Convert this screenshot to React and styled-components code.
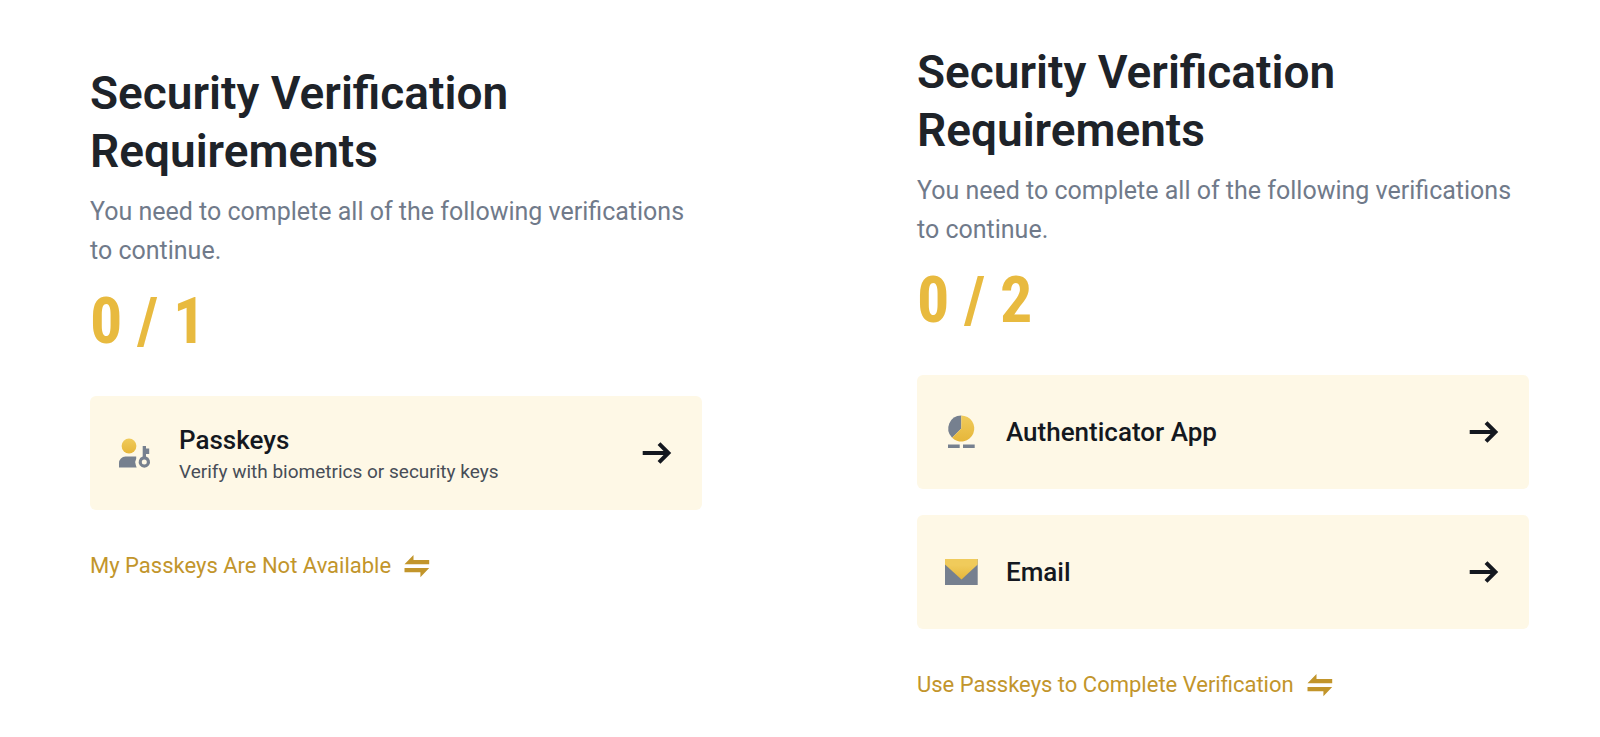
import React from "react";
import styled, { createGlobalStyle, ThemeProvider } from "styled-components";

const theme = {
  colors: {
    text: "#1e2329",
    textDeep: "#14181f",
    secondary: "#474d57",
    muted: "#707a8a",
    gold: "#e8ba3f",
    link: "#c2952b",
    card: "#fef8e6",
    white: "#ffffff",
  },
};

const panels = [
  {
    id: "passkeys",
    top: 64,
    total: 1,
    methods: [
      {
        name: "Passkeys",
        desc: "Verify with biometrics or security keys",
        icon: "passkeys",
      },
    ],
    switchText: "My Passkeys Are Not Available",
  },
  {
    id: "others",
    top: 43,
    total: 2,
    methods: [
      { name: "Authenticator App", icon: "authenticator" },
      { name: "Email", icon: "email" },
    ],
    switchText: "Use Passkeys to Complete Verification",
  },
];

const PasskeysIcon = () => (
  <svg width="32" height="32" viewBox="0 0 32 32" aria-hidden="true">
    <defs>
      <linearGradient id="passkeysGold" x1="0" y1="0" x2="0" y2="1">
        <stop offset="0" stopColor="#f0cb5b" />
        <stop offset="1" stopColor="#e6b63a" />
      </linearGradient>
    </defs>
    <circle cx="11" cy="9" r="7.4" fill="url(#passkeysGold)" />
    <path
      d="M1 30.500v-4.500a6.500 6.500 0 0 1 6.500-6.500H18.200v2.200a7 7 0 0 0-.4 6.300q.3 1.400.9 2.500z"
      fill="#76808f"
    />
    <path
      fillRule="evenodd"
      d="M24.700 9h3.300v2.500h3.200v5.500h-3.200v2.600a5.700 5.700 0 1 1-3.300 0zM26.300 22.500a2.500 2.500 0 1 0 0 5 2.500 2.500 0 1 0 0-5z"
      fill="#76808f"
    />
  </svg>
);

const AuthenticatorIcon = () => (
  <svg width="32" height="32" viewBox="0 0 32 32" aria-hidden="true">
    <defs>
      <linearGradient id="authGold" x1="0" y1="0" x2="0" y2="1">
        <stop offset="0" stopColor="#f0cb5b" />
        <stop offset="1" stopColor="#e6b63a" />
      </linearGradient>
    </defs>
    <path d="M16.300 12.500V-.5A13 13 0 0 0 7.100 21.700z" fill="#76808f" />
    <path d="M16.300 12.500V-.5A13 13 0 1 1 7.100 21.700z" fill="url(#authGold)" />
    <path d="M3 28.500h11.700v3.400H3zM18 28.500h11.700v3.400H18z" fill="#76808f" />
  </svg>
);

const EmailIcon = () => (
  <svg width="32" height="32" viewBox="0 0 32 32" aria-hidden="true">
    <defs>
      <linearGradient id="emailGold" x1="0" y1="0" x2="0" y2="1">
        <stop offset="0.3" stopColor="#f0cb5b" />
        <stop offset="1" stopColor="#e6b63a" />
      </linearGradient>
    </defs>
    <path d="M0 3h32.700v26H0z" fill="#76808f" />
    <path d="M0 3h32.700v5.500L16.500 23.500 0 8.500z" fill="url(#emailGold)" />
  </svg>
);

const icons = {
  passkeys: PasskeysIcon,
  authenticator: AuthenticatorIcon,
  email: EmailIcon,
};

const ArrowIcon = () => (
  <svg width="32" height="32" viewBox="0 0 32 32" fill="none" aria-hidden="true">
    <path
      d="M.7 16h26M17 6.600 26.400 16l-9.400 9.400"
      stroke="#14181f"
      strokeWidth="4"
    />
  </svg>
);

const SwitchIcon = () => (
  <svg width="26" height="24" viewBox="0 0 26 24" aria-hidden="true">
    <path
      d="M.5 10.200 9.500.9v5h15.700v4.300zM25.200 13.900 16.400 23.200v-5H.5v-4.300z"
      fill="#c2952b"
    />
  </svg>
);

const VerificationPanel = ({ top, total, methods, switchText }) => {
  return (
    <Panel $top={top}>
      <Title>Security Verification Requirements</Title>
      <Description>
        You need to complete all of the following verifications to continue.
      </Description>
      <Progress>0 / {total}</Progress>
      <MethodList>
        {methods.map(({ name, desc, icon }) => {
          const Icon = icons[icon];
          return (
            <li key={name}>
              <MethodButton type="button">
                <Icon />
                <MethodText $withDesc={Boolean(desc)}>
                  <MethodName>{name}</MethodName>
                  {desc && <MethodDesc>{desc}</MethodDesc>}
                </MethodText>
                <ArrowIcon />
              </MethodButton>
            </li>
          );
        })}
      </MethodList>
      <SwitchLink href="#">
        {switchText}
        <SwitchIcon />
      </SwitchLink>
    </Panel>
  );
};

const App = () => (
  <ThemeProvider theme={theme}>
    <GlobalStyle />
    <Page>
      {panels.map((panel) => (
        <VerificationPanel key={panel.id} {...panel} />
      ))}
    </Page>
  </ThemeProvider>
);

const GlobalStyle = createGlobalStyle`
  * {
    box-sizing: border-box;
  }
  body {
    margin: 0;
    background: ${({ theme }) => theme.colors.white};
    font-family: Roboto, "Noto Sans", sans-serif;
  }
`;

const Page = styled.main`
  display: grid;
  grid-template-columns: 1fr 1fr;
  column-gap: 215px;
  padding: 0 71px 0 90px;
`;

const Panel = styled.section`
  display: flex;
  flex-direction: column;
  align-items: flex-start;
  padding-top: ${(props) => props.$top}px;
`;

const Title = styled.h1`
  max-width: 480px;
  margin: 0;
  color: ${({ theme }) => theme.colors.text};
  font-size: 46px;
  font-weight: 600;
  line-height: 58px;
`;

const Description = styled.p`
  margin: 12px 0 0;
  color: ${({ theme }) => theme.colors.muted};
  font-size: 25px;
  line-height: 39px;
`;

const Progress = styled.p`
  margin: 16px 0 0;
  color: ${({ theme }) => theme.colors.gold};
  font-family: "Roboto Condensed", Roboto, sans-serif;
  font-size: 64px;
  font-weight: 700;
  line-height: 72px;
`;

const MethodList = styled.ul`
  display: flex;
  flex-direction: column;
  gap: 26px;
  width: 100%;
  margin: 38px 0 41px;
  padding: 0;
  list-style: none;
`;

const MethodButton = styled.button`
  display: flex;
  align-items: center;
  gap: 29px;
  width: 100%;
  min-height: 114px;
  padding: 0 28px;
  border: 0;
  border-radius: 6px;
  background: ${({ theme }) => theme.colors.card};
  font-family: inherit;
  text-align: left;
  cursor: pointer;

  svg {
    flex: none;
    overflow: visible;
  }
`;

const MethodText = styled.span`
  display: flex;
  flex: 1;
  flex-direction: column;
  padding-top: ${(props) => (props.$withDesc ? "4px" : "0")};
`;

const MethodName = styled.span`
  color: ${({ theme }) => theme.colors.textDeep};
  font-size: 26px;
  font-weight: 500;
  line-height: 34px;
`;

const MethodDesc = styled.span`
  color: ${({ theme }) => theme.colors.secondary};
  font-size: 19px;
  line-height: 30px;
`;

const SwitchLink = styled.a`
  display: inline-flex;
  align-items: center;
  gap: 13px;
  color: ${({ theme }) => theme.colors.link};
  font-size: 22px;
  line-height: 30px;
  text-decoration: none;
`;

export default App;
